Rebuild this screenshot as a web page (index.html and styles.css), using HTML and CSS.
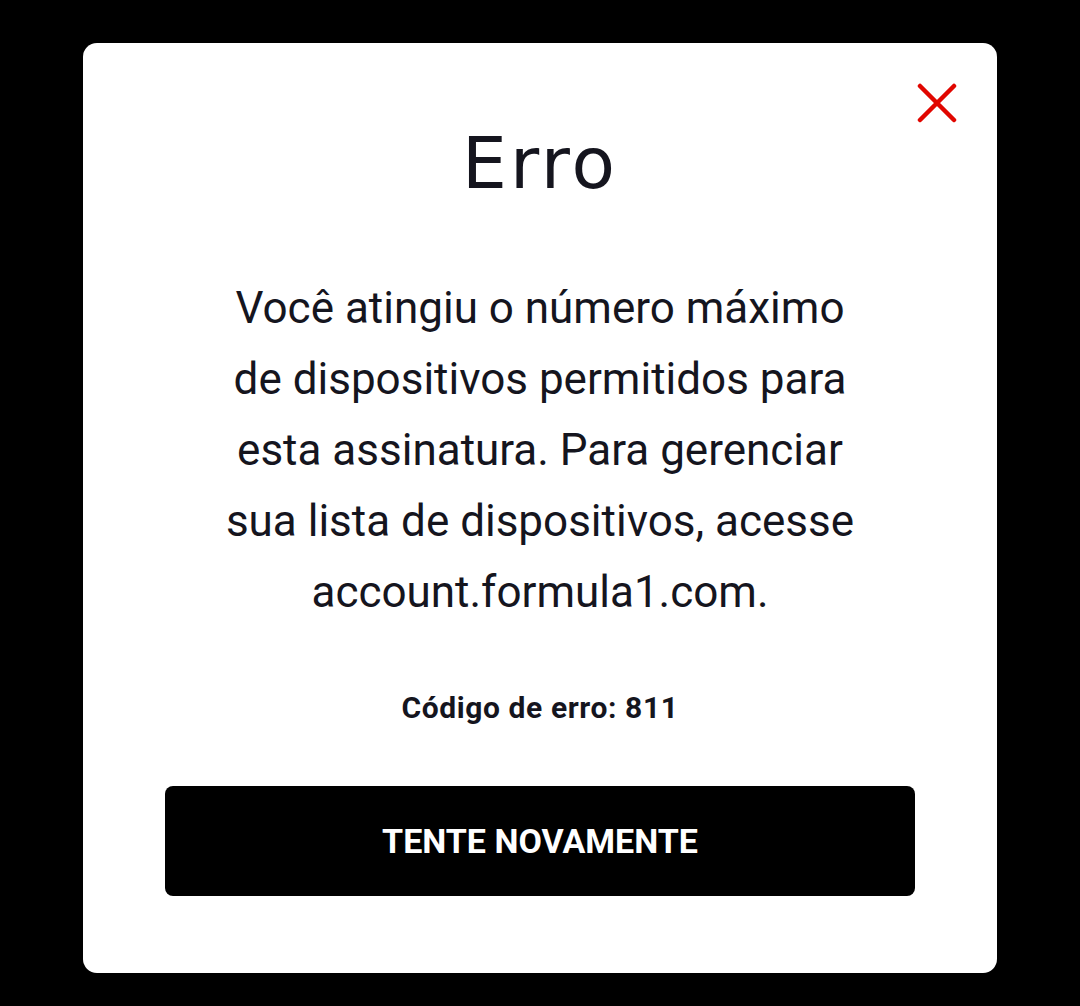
FILE: index.html
```html
<!DOCTYPE html>
<html lang="pt-BR">
<head>
<meta charset="utf-8">
<title>Erro</title>
<link rel="stylesheet" href="styles.css">
</head>
<body>
<div class="backdrop">
  <div class="modal" role="dialog" aria-labelledby="t">
    <button class="close" aria-label="Fechar">
      <svg viewBox="0 0 40 40" width="40" height="40"><path d="M3 3 L37 37 M37 3 L3 37" stroke="#e10600" stroke-width="4.5" stroke-linecap="round" fill="none"/></svg>
    </button>
    <h1 class="title" id="t">Erro</h1>
    <p class="message">Você atingiu o número máximo de dispositivos permitidos para esta assinatura. Para gerenciar sua lista de dispositivos, acesse account.formula1.com.</p>
    <p class="code">Código de erro: 811</p>
    <button class="retry">TENTE NOVAMENTE</button>
  </div>
</div>
</body>
</html>
```
FILE: styles.css
```css
html, body {
  margin: 0;
  padding: 0;
  background: #000;
}
body {
  width: 1080px;
  height: 1006px;
  overflow: hidden;
  font-family: Roboto, "Noto Sans", sans-serif;
  color: #15151e;
}
.backdrop {
  display: flex;
  justify-content: center;
  padding-top: 43px;
}
.modal {
  position: relative;
  box-sizing: border-box;
  width: 914px;
  height: 930px;
  background: #fff;
  border-radius: 14px;
  padding: 85px 82px 0;
  display: flex;
  flex-direction: column;
  align-items: center;
}
.close {
  position: absolute;
  top: 40px;
  right: 40px;
  width: 40px;
  height: 40px;
  padding: 0;
  border: 0;
  background: none;
  display: flex;
}
.title {
  margin: 0;
  font-family: "DejaVu Sans", sans-serif;
  font-weight: 400;
  font-size: 71px;
  line-height: 72px;
  letter-spacing: 3px;
}
.message {
  margin: 73px 0 0;
  max-width: 640px;
  text-align: center;
  font-size: 44px;
  line-height: 71px;
  font-weight: 400;
}
.code {
  margin: 63px 0 0;
  font-size: 30px;
  line-height: 34px;
  font-weight: 700;
  letter-spacing: 0.6px;
}
.retry {
  margin-top: 61px;
  width: 750px;
  height: 110px;
  border: 0;
  border-radius: 8px;
  background: #000;
  color: #fff;
  font-family: Roboto, "Noto Sans", sans-serif;
  font-size: 34px;
  font-weight: 700;
  padding: 0;
}
```
